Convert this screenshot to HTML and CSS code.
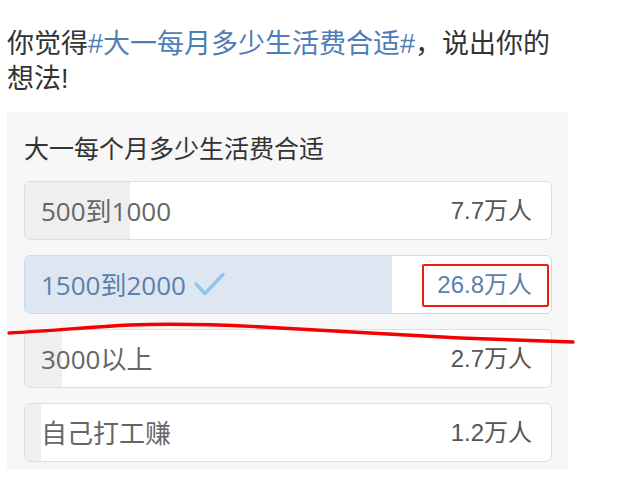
FILE: index.html
```html
<!DOCTYPE html>
<html lang="zh-CN">
<head>
    <meta charset="UTF-8">
    <meta name="viewport" content="width=device-width, initial-scale=1.0">
    <title>投票</title>
    <link rel="stylesheet" href="styles.css">
</head>
<body>
    <div class="post">
        <p class="post-text">你觉得<a class="topic">#大一每月多少生活费合适#</a>，说出你的想法!</p>

        <div class="poll">
            <div class="poll-title">大一每个月多少生活费合适</div>
            <div class="options">
                <div class="option">
                    <div class="bar" style="width: 20%"></div>
                    <span class="label">500到1000</span>
                    <span class="count">7.7万人</span>
                </div>
                <div class="option voted">
                    <div class="bar" style="width: 69.8%"></div>
                    <span class="label">1500到2000
                        <svg class="tick" width="32" height="24" viewBox="0 0 32 24">
                            <path d="M3 12 L12 21.5 L30 2.5" fill="none" stroke="#8fc5ef" stroke-width="3.4" stroke-linecap="round" stroke-linejoin="round"/>
                        </svg>
                    </span>
                    <span class="count marked">26.8万人</span>
                </div>
                <div class="option">
                    <div class="bar" style="width: 7%"></div>
                    <span class="label">3000以上</span>
                    <span class="count">2.7万人</span>
                </div>
                <div class="option">
                    <div class="bar" style="width: 3.1%"></div>
                    <span class="label">自己打工赚</span>
                    <span class="count">1.2万人</span>
                </div>
            </div>
        </div>
    </div>

    <!-- hand-drawn red stroke across the poll -->
    <svg class="scribble" width="617" height="482" viewBox="0 0 617 482">
        <path d="M9 333 C 50 331, 90 327, 130 325 C 180 323, 230 325, 280 328 C 340 331, 400 335, 460 338 C 510 340, 545 341, 573 342"
              fill="none" stroke="#f40000" stroke-width="3.4" stroke-linecap="round"/>
    </svg>
</body>
</html>
```

FILE: styles.css
```css
body {
    margin: 0;
    background-color: #fff;
    font-family: "Liberation Sans", "Noto Sans CJK SC", sans-serif;
    color: #333;
}

.post {
    padding: 27px 7px 0;
}

.post-text {
    margin: 0;
    font-size: 27px;
    line-height: 35px;
    color: #333;
    width: 556px;
}

.topic {
    color: #4f7db5;
}

.poll {
    margin-top: 15px;
    width: 561px;
    box-sizing: border-box;
    padding: 21px 16px 7px 17px;
    background-color: #f7f7f7;
}

.poll-title {
    font-size: 25px;
    line-height: 32px;
    color: #333;
    margin-bottom: 16px;
}

.options {
    display: flex;
    flex-direction: column;
    gap: 15px;
}

.option {
    position: relative;
    height: 59px;
    box-sizing: border-box;
    border: 1px solid #dedede;
    border-radius: 6px;
    background-color: #fff;
    display: flex;
    align-items: center;
    justify-content: space-between;
    padding: 0 19px 0 16px;
    font-size: 24px;
    color: #666;
}

.bar {
    position: absolute;
    left: 0;
    top: 0;
    bottom: 0;
    background-color: #efefef;
    border-radius: 5px 0 0 5px;
}

.label,
.count {
    position: relative;
    display: flex;
    align-items: center;
    line-height: 28px;
}

.label {
    font-family: "Open Sans", "Noto Sans CJK SC", sans-serif;
    font-size: 26px;
}

.count {
    color: #555;
}

.option.voted {
    border-color: #c3dcf5;
    color: #5b7fae;
}

.option.voted .bar {
    background-color: #dde6f1;
}

.option.voted .count {
    color: #5b7fae;
}

.tick {
    margin-left: 7px;
    margin-top: -2px;
}

/* red box drawn around the winning count */
.count.marked::after {
    content: "";
    position: absolute;
    left: -15px;
    right: -17px;
    top: -7px;
    bottom: -8px;
    border: 2px solid #f01c10;
    border-radius: 2px;
}

.scribble {
    position: absolute;
    left: 0;
    top: 0;
    pointer-events: none;
}
```
